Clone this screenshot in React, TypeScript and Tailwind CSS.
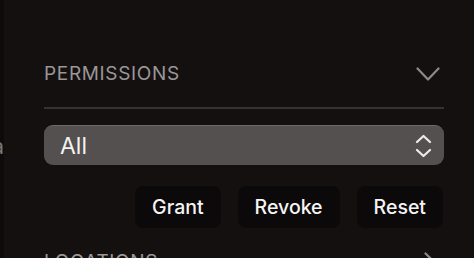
import { useState } from "react";

/* ── Icons ─────────────────────────────────────────────────────────────── */
function ChevronDown() {
  return (
    <svg width="24" height="15" viewBox="0 0 24 15" fill="none" className="mr-[4px]">
      <polyline points="1.5,1.5 12,12.5 22.5,1.5" stroke="#8d8989" strokeWidth="2.2" strokeLinecap="round" strokeLinejoin="round" />
    </svg>
  );
}

function ChevronRight() {
  return (
    <svg width="14" height="24" viewBox="0 0 14 24" fill="none" className="mr-[6px] mt-[3px]">
      <polyline points="1.5,1.5 12.5,12 1.5,22.5" stroke="#8d8989" strokeWidth="2.2" strokeLinecap="round" strokeLinejoin="round" />
    </svg>
  );
}

function UpDown() {
  return (
    <svg width="17" height="24" viewBox="0 0 17 24" fill="none">
      <polyline points="2,8 8.5,2 15,8" stroke="#ebe9e9" strokeWidth="2.3" strokeLinecap="round" strokeLinejoin="round" />
      <polyline points="2,16 8.5,22 15,16" stroke="#ebe9e9" strokeWidth="2.3" strokeLinecap="round" strokeLinejoin="round" />
    </svg>
  );
}

/* ── Section header ────────────────────────────────────────────────────── */
function SectionHeader({ title, open }: { title: string; open?: boolean }) {
  return (
    <div className="flex h-[24px] shrink-0 items-center justify-between">
      <span className="text-[19px] leading-[24px] tracking-[0.035em] text-[#9a9797]">{title}</span>
      {open ? <ChevronDown /> : <ChevronRight />}
    </div>
  );
}

export default function App() {
  const [scope] = useState("All");
  const actions = ["Grant", "Revoke", "Reset"];

  return (
    <div className="flex h-[258px] w-[474px] overflow-hidden bg-[#141010] font-['Inter',sans-serif]">
      {/* neighbouring panel edge */}
      <div className="flex w-[4px] shrink-0 justify-end overflow-hidden bg-[#0c0a0a] pt-[133px]">
        <span className="whitespace-nowrap text-[22px] leading-[26px] text-[#7a7676]">ta</span>
      </div>

      <div className="flex flex-1 flex-col pl-[40px] pr-[30px] pt-[62px]">
        <SectionHeader title="PERMISSIONS" open />
        <div className="mt-[21px] h-[2px] shrink-0 bg-[#363232]" />

        <button className="mt-[16px] flex h-[40px] shrink-0 items-center justify-between rounded-[9px] border-t border-[#6d6a69] bg-[#53504f] pl-[16px] pr-[12px] text-left">
          <span className="text-[23px] leading-[28px] text-[#f4f2f2]">{scope}</span>
          <UpDown />
        </button>

        <div className="mt-[21px] flex shrink-0 justify-end gap-[17px] pr-[1px]">
          {actions.map((a) => (
            <button
              key={a}
              className="h-[42px] shrink-0 rounded-[8px] bg-[#0b0909] px-[17px] text-[19.5px] font-medium leading-[24px] text-[#f6f4f4]"
            >
              {a}
            </button>
          ))}
        </div>

        <div className="mt-[22px] shrink-0">
          <SectionHeader title="LOCATIONS" />
        </div>
      </div>
    </div>
  );
}
